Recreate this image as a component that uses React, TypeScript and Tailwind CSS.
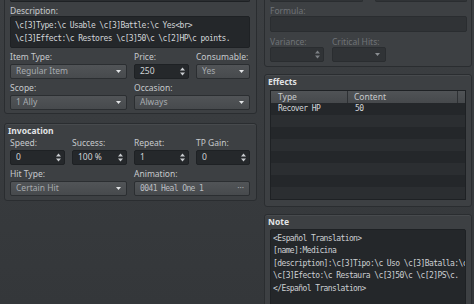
import React from "react";

const mono = "font-['DejaVu_Sans_Mono','Liberation_Mono',monospace] text-[8px] tracking-[-0.6px]";

function Caret({ dim }: { dim?: boolean }) {
  return (
    <svg width="5" height="3" viewBox="0 0 5 3" className="shrink-0">
      <path d="M0 0h5L2.5 3z" fill={dim ? "#8a8e92" : "#e2e4e6"} />
    </svg>
  );
}

function SpinArrows({ dim }: { dim?: boolean }) {
  const c = dim ? "#7d8185" : "#c9ccd0";
  return (
    <svg width="5" height="9" viewBox="0 0 5 9" className="shrink-0">
      <path d="M0 3.5h5L2.5 0.5z" fill={c} />
      <path d="M0 5.5h5L2.5 8.5z" fill={c} />
    </svg>
  );
}

function Label({ children, dim }: { children: React.ReactNode; dim?: boolean }) {
  return (
    <div className={`h-[10px] leading-[10px] whitespace-nowrap ${dim ? "text-[#6f7377]" : "text-[#c6c9cc]"}`}>
      {children}
    </div>
  );
}

function Select({ value, dim }: { value?: string; dim?: boolean }) {
  return (
    <div
      className={`flex h-[15px] items-center justify-between rounded-[2px] border px-[5px] ${
        dim
          ? "border-[#2a2d30] bg-[#303336]"
          : "border-[#2b2e31] bg-gradient-to-b from-[#515457] to-[#474a4d] text-[#a7abaf]"
      }`}
    >
      <span className="leading-none">{value}</span>
      <Caret dim={dim} />
    </div>
  );
}

function Spin({ value, dim }: { value?: string; dim?: boolean }) {
  return (
    <div
      className={`flex h-[15px] items-center justify-between rounded-[2px] border pl-[5px] pr-[3px] ${
        dim ? "border-[#2a2d30] bg-[#303336]" : "border-[#1e2124] bg-[#25282b] text-[#d0d3d6]"
      }`}
    >
      <span className="leading-none">{value}</span>
      <SpinArrows dim={dim} />
    </div>
  );
}

function Field({ label, children, className = "", dim }: { label: string; children: React.ReactNode; className?: string; dim?: boolean }) {
  return (
    <div className={className}>
      <Label dim={dim}>{label}</Label>
      <div className="mt-[2px]">{children}</div>
    </div>
  );
}

const group = "rounded-[3px] border border-[#2a2d30] bg-[#3d4043] shadow-[inset_0_1px_0_#474a4d]";

export default function App() {
  const rows = [
    ["Recover HP", "50"],
    ["", ""],
    ["", ""],
    ["", ""],
    ["", ""],
    ["", ""],
    ["", ""],
    ["", ""],
  ];
  const note = [
    "<Español Translation>",
    "[name]:Medicina",
    "[description]:\\c[3]Tipo:\\c Uso \\c[3]Batalla:\\c Sí<br>",
    "\\c[3]Efecto:\\c Restaura \\c[3]50\\c \\c[2]PS\\c.",
    "</Español Translation>",
  ];

  return (
    <div className="flex h-[304px] w-[474px] overflow-hidden bg-gradient-to-b from-[#3c3f42] to-[#34373a] font-['Noto_Sans',sans-serif] text-[8.5px] text-[#c6c9cc]">
      {/* left column */}
      <div className="ml-[4px] flex w-[253px] shrink-0 flex-col">
        <div className={`${group} -mt-[12px] pl-[5px] pr-[6px] pb-[3px]`}>
          <div className="h-[13px] rounded-b-[2px] border border-t-0 border-[#1e2124] bg-[#2a2d30]" />
          <div className="mt-[4px]">
            <Label>Description:</Label>
          </div>
          <div className={`h-[32px] overflow-hidden rounded-[2px] border border-[#1e2124] bg-[#24272a] pl-[4px] pt-[2px] leading-[13px] whitespace-nowrap text-[#d2d5d8] ${mono}`}>
            <div>{"\\c[3]Type:\\c Usable \\c[3]Battle:\\c Yes<br>"}</div>
            <div>{"\\c[3]Effect:\\c Restores \\c[3]50\\c \\c[2]HP\\c points."}</div>
          </div>
          <div className="mt-[4px] grid grid-cols-[117px_55px_54px] gap-x-[7px] gap-y-[4px]">
            <Field label="Item Type:">
              <Select value="Regular Item" />
            </Field>
            <Field label="Price:">
              <Spin value="250" />
            </Field>
            <Field label="Consumable:">
              <Select value="Yes" />
            </Field>
            <Field label="Scope:">
              <Select value="1 Ally" />
            </Field>
            <Field label="Occasion:" className="col-span-2">
              <Select value="Always" />
            </Field>
          </div>
        </div>

        <div className={`${group} mt-[9px] pl-[5px] pr-[6px] pt-[2px] pb-[4px]`}>
          <div className="-ml-[2px] h-[10px] leading-[10px] font-bold text-[#e2e4e6]">Invocation</div>
          <div className="mt-[2px] grid grid-cols-[55px_55px_55px_54px] gap-x-[7px] gap-y-[4px]">
            <Field label="Speed:">
              <Spin value="0" />
            </Field>
            <Field label="Success:">
              <Spin value="100 %" />
            </Field>
            <Field label="Repeat:">
              <Spin value="1" />
            </Field>
            <Field label="TP Gain:">
              <Spin value="0" />
            </Field>
            <Field label="Hit Type:" className="col-span-2">
              <Select value="Certain Hit" />
            </Field>
            <Field label="Animation:" className="col-span-2">
              <div className="flex h-[15px] items-center justify-between rounded-[2px] border border-[#2b2e31] bg-gradient-to-b from-[#515457] to-[#474a4d] px-[5px] text-[#b9bdc1]">
                <span className={`leading-none ${mono}`}>0041 Heal One 1</span>
                <span className="leading-none text-[#a7abaf]">···</span>
              </div>
            </Field>
          </div>
        </div>
      </div>

      {/* right column */}
      <div className="ml-[7px] flex w-[208px] shrink-0 flex-col">
        <div className={`${group} -mt-[12px] pl-[5px] pr-[4px] pb-[4px]`}>
          <div className="grid grid-cols-[93px_92px] gap-x-[12px]">
            <div className="h-[13px] rounded-b-[2px] border border-t-0 border-[#2a2d30] bg-[#303336]" />
            <div className="h-[13px] rounded-b-[2px] border border-t-0 border-[#2a2d30] bg-[#303336]" />
          </div>
          <div className="mt-[4px]">
            <Label dim>Formula:</Label>
          </div>
          <div className="h-[16px] rounded-[2px] border border-[#2a2d30] bg-[#303336]" />
          <div className="mt-[5px] grid grid-cols-[54px_54px] gap-x-[8px]">
            <div>
              <Label dim>Variance:</Label>
              <Spin dim />
            </div>
            <div>
              <Label dim>Critical Hits:</Label>
              <Select dim />
            </div>
          </div>
        </div>

        <div className={`${group} mt-[7px] pl-[5px] pr-[5px] pt-[2px] pb-[6px]`}>
          <div className="-ml-[2px] h-[10px] leading-[10px] font-bold text-[#e2e4e6]">Effects</div>
          <div className="mt-[3px] overflow-hidden border border-[#1e2124] bg-[#24272a]">
            <div className="flex h-[12px] items-center bg-gradient-to-b from-[#505356] to-[#46494c] leading-none text-[#c6c9cc]">
              <div className="w-[77px] border-r border-[#2e3134] pl-[7px] leading-[12px]">Type</div>
              <div className="w-[110px] border-r border-[#2e3134] pl-[6px] leading-[12px]">Content</div>
              <div className="flex-1" />
            </div>
            {rows.map((r, i) => (
              <div
                key={i}
                className={`flex h-[12px] items-center leading-[12px] text-[#d2d5d8] ${mono} ${
                  i % 2 === 0 ? "bg-[#24272a]" : "bg-[#2b2e31]"
                }`}
              >
                <div className="w-[77px] pl-[7px]">{r[0]}</div>
                <div className="pl-[7px]">{r[1]}</div>
              </div>
            ))}
          </div>
        </div>

        <div className={`${group} mt-[7px] pl-[5px] pr-[5px] pt-[2px]`}>
          <div className="-ml-[2px] h-[10px] leading-[10px] font-bold text-[#e2e4e6]">Note</div>
          <div className={`mt-[2px] h-[100px] overflow-hidden rounded-[2px] border border-[#1e2124] bg-[#24272a] pl-[2px] pt-[3px] leading-[12.4px] whitespace-nowrap text-[#cdd0d3] ${mono}`}>
            {note.map((l, i) => (
              <div key={i}>{l}</div>
            ))}
          </div>
        </div>
      </div>
    </div>
  );
}
